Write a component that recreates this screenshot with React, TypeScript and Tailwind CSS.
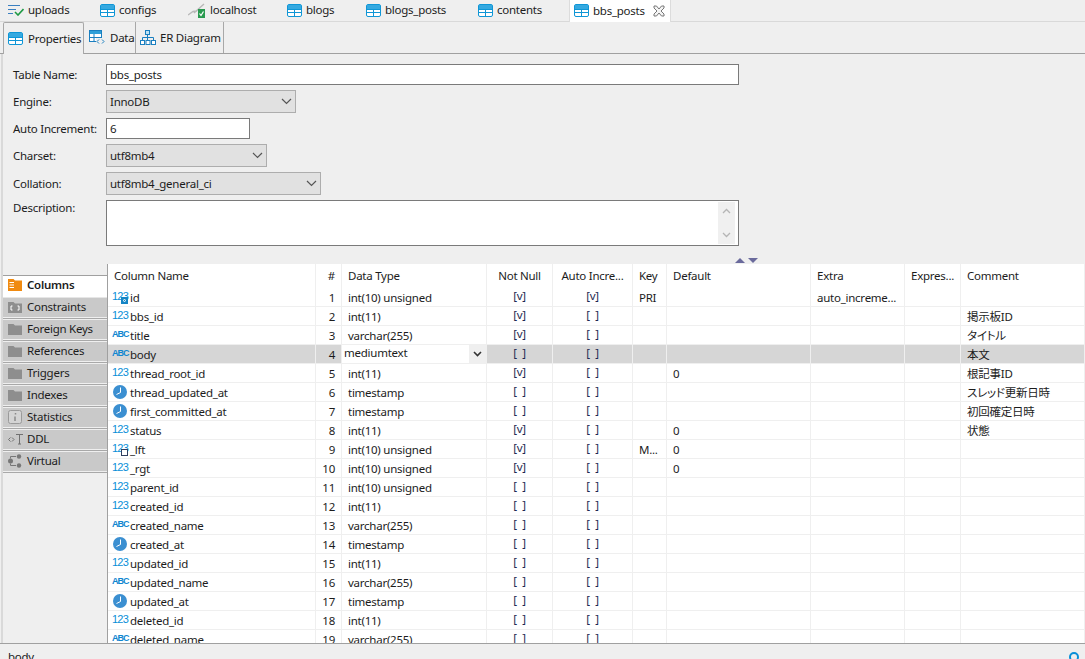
import type { ReactNode } from 'react'

const font = "font-['Noto_Sans','Noto_Sans_CJK_JP',sans-serif]"

function TableIcon() {
  return (
    <svg width="15" height="13" viewBox="0 0 15 13" className="shrink-0">
      <rect x="0.5" y="0.5" width="14" height="12" rx="1.5" fill="#fff" stroke="#0f96d6" />
      <rect x="1" y="1" width="13" height="4" fill="#35a9e0" />
      <path d="M0.5 5.5H14.5M0.5 8.5H14.5M7.5 5V12.5" stroke="#0f96d6" fill="none" />
    </svg>
  )
}

function UploadsIcon() {
  return (
    <svg width="16" height="12" viewBox="0 0 16 12" className="shrink-0">
      <path d="M0 1.5H12M0 5.5H8M0 9.5H5" stroke="#3a7fc0" fill="none" />
      <path d="M7 8L10 11L15.5 5" stroke="#1f9a45" strokeWidth="1.6" fill="none" />
    </svg>
  )
}

function HostIcon() {
  return (
    <svg width="18" height="15" viewBox="0 0 18 15" className="shrink-0">
      <path d="M0 12L5 8.5L9 8M6 10L16 1" stroke="#b8b8b8" strokeWidth="1.4" fill="none" />
      <rect x="10" y="6" width="7" height="9" fill="#2a9a50" />
      <path d="M11.5 10.5L13 12.5L15.5 8.5" stroke="#fff" strokeWidth="1.2" fill="none" />
    </svg>
  )
}

function DataIcon() {
  return (
    <svg width="16" height="15" viewBox="0 0 16 15" className="shrink-0">
      <rect x="0.5" y="0.5" width="12" height="11" fill="#fff" stroke="#1a7fc0" />
      <rect x="1" y="1" width="11" height="3" fill="#2f9fd8" />
      <path d="M1 7.5H12M5 4V12" stroke="#1a7fc0" fill="none" />
      <rect x="7" y="8" width="9" height="7" fill="#efefef" />
      <path d="M10 9.5L8 11.5L10 13.5M13 9.5L15 11.5L13 13.5" stroke="#1a7fc0" fill="none" />
    </svg>
  )
}

function ErIcon() {
  return (
    <svg width="16" height="15" viewBox="0 0 16 15" className="shrink-0">
      <rect x="5.5" y="0.5" width="4" height="4" fill="#bfe3f5" stroke="#1a7fc0" />
      <rect x="0.5" y="10.5" width="4" height="4" fill="#fff" stroke="#1a7fc0" />
      <rect x="6" y="10.5" width="4" height="4" fill="#fff" stroke="#1a7fc0" />
      <rect x="11.5" y="10.5" width="4" height="4" fill="#fff" stroke="#1a7fc0" />
      <path d="M7.5 4.5V10.5M2.5 10.5V7.5H13.5V10.5" stroke="#1a7fc0" fill="none" />
    </svg>
  )
}

function Chevron() {
  return (
    <svg width="11" height="7" viewBox="0 0 11 7" className="shrink-0">
      <path d="M1 1L5.5 5.5L10 1" stroke="#555" strokeWidth="1.2" fill="none" />
    </svg>
  )
}

function Folder({ children }: { children?: ReactNode }) {
  return (
    <svg width="14" height="12" viewBox="0 0 14 12" className="shrink-0">
      <path d="M0 1H5.5L7 2.5H14V12H0Z" fill="#8e8e8e" />
      {children}
    </svg>
  )
}

function SideIcon({ name }: { name: string }) {
  if (name === 'Columns') {
    return (
      <svg width="14" height="12" viewBox="0 0 14 12" className="shrink-0">
        <path d="M0 0H5.5L7 1.5H14V12H0Z" fill="#f08a10" />
        <path d="M1.5 3.5H6M1.5 6H6M1.5 8.5H6" stroke="#fff" strokeWidth="1.2" />
      </svg>
    )
  }
  if (name === 'Constraints') {
    return (
      <Folder>
        <path d="M4.5 5H3V9H4.5M9.5 5H11V9H9.5" stroke="#fff" fill="none" />
      </Folder>
    )
  }
  if (name === 'Statistics') {
    return (
      <svg width="14" height="14" viewBox="0 0 14 14" className="shrink-0">
        <rect x="0.5" y="0.5" width="13" height="13" rx="2" fill="#d4d4d4" stroke="#9a9a9a" />
        <path d="M7.5 3V4.5M7 6.5V11" stroke="#8a8a8a" strokeWidth="1.5" />
      </svg>
    )
  }
  if (name === 'DDL') {
    return (
      <svg width="16" height="12" viewBox="0 0 16 12" className="shrink-0">
        <path d="M2.5 4.5L0.5 6.5L2.5 8.5M4 4.5L6 6.5L4 8.5" stroke="#707070" fill="none" />
        <path d="M8 1.5H15M11.5 1.5V11M10 11H13" stroke="#707070" fill="none" />
      </svg>
    )
  }
  if (name === 'Virtual') {
    return (
      <svg width="14" height="14" viewBox="0 0 14 14" className="shrink-0">
        <circle cx="11" cy="2.5" r="2.2" fill="#777" />
        <circle cx="2.5" cy="7" r="2.5" fill="#777" />
        <circle cx="11" cy="11.5" r="2.2" fill="#777" />
        <path d="M2.5 4.5V2.5H8M2.5 9.5V11.5H8" stroke="#777" fill="none" />
      </svg>
    )
  }
  return <Folder />
}

function TypeIcon({ type, badge }: { type: string; badge?: string }) {
  return (
    <span className="relative mr-[2px] h-[18px] w-[16px] shrink-0 overflow-visible">
      {type === 'num' && (
        <span className="absolute left-0 top-[1px] font-['Liberation_Sans',sans-serif] text-[11px] leading-[14px] tracking-[-0.8px] text-[#0a8fd8]">123</span>
      )}
      {type === 'str' && (
        <span className="absolute left-0 top-[2px] font-['Liberation_Sans',sans-serif] text-[9px] leading-[12px] font-bold tracking-[-1px] text-[#0f86d0]">ABC</span>
      )}
      {type === 'time' && (
        <svg width="16" height="18" viewBox="0 0 16 18" className="absolute left-0 top-0">
          <circle cx="8" cy="9" r="7" fill="#3b8fd1" />
          <path d="M8.5 4.5V9.5L4.5 11.5" stroke="#fff" strokeWidth="1" fill="none" />
        </svg>
      )}
      {badge === 'key' && (
        <span className="absolute left-[9px] top-[9px] flex h-[7px] w-[7px] items-center justify-center bg-[#1585c5]">
          <span className="h-[3px] w-[3px] rounded-full border border-white" />
        </span>
      )}
      {badge === 'link' && (
        <span className="absolute left-[9px] top-[9px] h-[7px] w-[7px] border border-[#2f3f60] bg-white" />
      )}
    </span>
  )
}

const topTabs = [
  { name: 'uploads', w: 'w-[92px]', icon: <UploadsIcon /> },
  { name: 'configs', w: 'w-[88px]', icon: <TableIcon /> },
  { name: 'localhost', w: 'w-[99px]', icon: <HostIcon /> },
  { name: 'blogs', w: 'w-[79px]', icon: <TableIcon /> },
  { name: 'blogs_posts', w: 'w-[112px]', icon: <TableIcon /> },
  { name: 'contents', w: 'w-[99px]', icon: <TableIcon /> },
]

const sideTabs = ['Constraints', 'Foreign Keys', 'References', 'Triggers', 'Indexes', 'Statistics', 'DDL', 'Virtual']

const cols = [
  { name: 'Column Name', w: 'w-[208px]', align: 'pl-[6px]' },
  { name: '#', w: 'w-[26px]', align: 'justify-end pr-[6px]' },
  { name: 'Data Type', w: 'w-[145px]', align: 'pl-[6px]' },
  { name: 'Not Null', w: 'w-[66px]', align: 'justify-center' },
  { name: 'Auto Incre...', w: 'w-[80px]', align: 'justify-center' },
  { name: 'Key', w: 'w-[34px]', align: 'pl-[6px]' },
  { name: 'Default', w: 'w-[144px]', align: 'pl-[6px]' },
  { name: 'Extra', w: 'w-[94px]', align: 'pl-[6px]' },
  { name: 'Expres...', w: 'w-[56px]', align: 'pl-[6px]' },
  { name: 'Comment', w: 'w-[124px]', align: 'pl-[6px]' },
]

type Row = [string, string, string, boolean, boolean, string, string, string, string, string?]

const rows: Row[] = [
  ['num', 'id', 'int(10) unsigned', true, true, 'PRI', '', 'auto_increme...', '', 'key'],
  ['num', 'bbs_id', 'int(11)', true, false, '', '', '', '掲示板ID'],
  ['str', 'title', 'varchar(255)', true, false, '', '', '', 'タイトル'],
  ['str', 'body', 'mediumtext', false, false, '', '', '', '本文'],
  ['num', 'thread_root_id', 'int(11)', true, false, '', '0', '', '根記事ID'],
  ['time', 'thread_updated_at', 'timestamp', false, false, '', '', '', 'スレッド更新日時'],
  ['time', 'first_committed_at', 'timestamp', false, false, '', '', '', '初回確定日時'],
  ['num', 'status', 'int(11)', true, false, '', '0', '', '状態'],
  ['num', '_lft', 'int(10) unsigned', true, false, 'M...', '0', '', '', 'link'],
  ['num', '_rgt', 'int(10) unsigned', true, false, '', '0', '', ''],
  ['num', 'parent_id', 'int(10) unsigned', false, false, '', '', '', ''],
  ['num', 'created_id', 'int(11)', false, false, '', '', '', ''],
  ['str', 'created_name', 'varchar(255)', false, false, '', '', '', ''],
  ['time', 'created_at', 'timestamp', false, false, '', '', '', ''],
  ['num', 'updated_id', 'int(11)', false, false, '', '', '', ''],
  ['str', 'updated_name', 'varchar(255)', false, false, '', '', '', ''],
  ['time', 'updated_at', 'timestamp', false, false, '', '', '', ''],
  ['num', 'deleted_id', 'int(11)', false, false, '', '', '', ''],
  ['str', 'deleted_name', 'varchar(255)', false, false, '', '', '', ''],
]

function Check({ on }: { on: boolean }) {
  return <span className="-mt-[3px] text-[#1e2a52]">{on ? '[v]' : '[\u00a0\u00a0]'}</span>
}

function FormRow({ label, children }: { label: string; children: ReactNode }) {
  return (
    <div className="flex items-center">
      <span className="w-[93px] shrink-0">{label}</span>
      {children}
    </div>
  )
}

function Select({ value, width }: { value: string; width: string }) {
  return (
    <div className={`flex h-[23px] ${width} items-center justify-between border border-[#adadad] bg-[#e1e1e1] pl-[3px] pr-[3px]`}>
      <span>{value}</span>
      <Chevron />
    </div>
  )
}

export default function App() {
  return (
    <div className={`flex h-[659px] w-[1085px] flex-col overflow-hidden bg-[#efefef] text-[11.5px] tracking-[-0.25px] text-[#1c1c1c] ${font} [font-feature-settings:'palt']`}>
      {/* editor tabs */}
      <div className="flex h-[22px] shrink-0 border-b border-[#d9d9d9]">
        {topTabs.map((tab) => (
          <div key={tab.name} className={`flex ${tab.w} items-center gap-[4px] pb-[1px] pl-[8px]`}>
            {tab.icon}
            <span>{tab.name}</span>
          </div>
        ))}
        <div className="flex h-[22px] w-[102px] items-center gap-[4px] border-x border-[#dcdcdc] bg-white pb-[1px] pl-[4px]">
          <TableIcon />
          <span>bbs_posts</span>
          <svg width="12" height="12" viewBox="0 0 12 12" className="ml-[4px] shrink-0">
            <path d="M1 1H3.5L6 4L8.5 1H11V3L8 6L11 9V11H8.5L6 8L3.5 11H1V9L4 6L1 3Z" fill="#f4f4f4" stroke="#777" />
          </svg>
        </div>
      </div>

      {/* sub tabs */}
      <div className="flex h-[32px] shrink-0 whitespace-nowrap border-b border-[#a0a0a0] pl-[3px]">
        <div className="-mb-[1px] flex h-[32px] w-[81px] items-center gap-[5px] rounded-t-[2px] border-x border-t border-[#a8a8a8] bg-[#efefef] pl-[4px]">
          <TableIcon />
          <span className="mt-[1px]">Properties</span>
        </div>
        <div className="flex w-[52px] items-center gap-[5px] border-r border-[#a8a8a8] pl-[5px]">
          <DataIcon />
          <span className="mt-[1px]">Data</span>
        </div>
        <div className="flex w-[88px] items-center gap-[4px] border-r border-[#a8a8a8] pl-[4px]">
          <ErIcon />
          <span className="mt-[1px]">ER Diagram</span>
        </div>
      </div>

      <div className="ml-[1px] flex min-h-0 flex-1 flex-col border-l-2 border-l-[#d9d9d9]">
        {/* table properties */}
        <div className="flex shrink-0 flex-col gap-[5px] pl-[10px] pt-[10px]">
          <FormRow label="Table Name:">
            <div className="flex h-[21px] w-[633px] items-center border border-[#7a7a7a] bg-white pl-[3px]">bbs_posts</div>
          </FormRow>
          <FormRow label="Engine:">
            <Select value="InnoDB" width="w-[190px]" />
          </FormRow>
          <FormRow label="Auto Increment:">
            <div className="flex h-[21px] w-[144px] items-center border border-[#7a7a7a] bg-white pl-[3px]">6</div>
          </FormRow>
          <FormRow label="Charset:">
            <Select value="utf8mb4" width="w-[161px]" />
          </FormRow>
          <FormRow label="Collation:">
            <Select value="utf8mb4_general_ci" width="w-[215px]" />
          </FormRow>
          <div className="flex items-start">
            <span className="-mt-[1px] w-[93px] shrink-0">Description:</span>
            <div className="flex h-[46px] w-[633px] justify-end border border-[#7a7a7a] bg-white pr-[3px]">
              <div className="my-[1px] flex w-[17px] flex-col items-center justify-between bg-[#f0f0f0] py-[6px]">
                <svg width="9" height="6" viewBox="0 0 9 6">
                  <path d="M1 5L4.5 1.5L8 5" stroke="#b5b5b5" strokeWidth="1.3" fill="none" />
                </svg>
                <svg width="9" height="6" viewBox="0 0 9 6">
                  <path d="M1 1L4.5 4.5L8 1" stroke="#b5b5b5" strokeWidth="1.3" fill="none" />
                </svg>
              </div>
            </div>
          </div>
        </div>

        {/* sash */}
        <div className="flex h-[18px] shrink-0 items-end justify-start gap-[3px] pb-[1px] pl-[732px]">
          <span className="h-0 w-0 border-x-[5px] border-b-[5px] border-x-transparent border-b-[#6a6a9c]" />
          <span className="h-0 w-0 border-x-[5px] border-t-[5px] border-x-transparent border-t-[#6a6a9c]" />
        </div>

        <div className="flex min-h-0 flex-1">
          {/* side folders */}
          <div className="flex w-[105px] shrink-0 flex-col border-r border-[#a0a0a0] pt-[11px]">
            <div className="flex h-[22px] items-center gap-[5px] border-t border-[#a0a0a0] bg-white pb-[3px] pl-[5px] font-semibold">
              <SideIcon name="Columns" />
              <span>Columns</span>
            </div>
            <div className="h-[1px] bg-[#e6e6e6]" />
            {sideTabs.map((name) => (
              <div key={name} className="flex flex-col">
                <div className="flex h-[19px] items-center gap-[5px] bg-[#c9c9c9] pb-[2px] pl-[5px]">
                  <span className="flex w-[16px] justify-start">
                    <SideIcon name={name} />
                  </span>
                  <span className="-ml-[2px]">{name}</span>
                </div>
                <div className="h-[1px] bg-[#efefef]" />
                <div className="h-[1px] bg-[#a8a8a8]" />
                <div className="h-[1px] bg-[#efefef]" />
              </div>
            ))}
          </div>

          {/* columns grid */}
          <div className="flex min-w-0 flex-1 flex-col overflow-hidden bg-white">
            <div className="flex h-[24px] shrink-0">
              {cols.map((col) => (
                <div key={col.name} className={`flex ${col.w} shrink-0 items-center whitespace-nowrap border-r border-[#efefef] ${col.align}`}>
                  {col.name}
                </div>
              ))}
            </div>
            {rows.map((row, n) => {
              const selected = row[1] === 'body'
              const bg = selected ? 'bg-[#d6d6d6]' : ''
              const cells: ReactNode[] = [
                <span className="-ml-[2px] flex items-center">
                  <TypeIcon type={row[0]} badge={row[9]} />
                  <span className="mt-[1px]">{row[1]}</span>
                </span>,
                <span className="mt-[2px]">{n + 1}</span>,
                selected ? (
                  <div className="-ml-[6px] flex h-[18px] w-[144px]">
                    <div className="flex w-[127px] items-center bg-white pl-[2px]">
                      <span className="-mt-[2px]">mediumtext</span>
                    </div>
                    <div className="flex w-[17px] items-center justify-center bg-[#efefef]">
                      <svg width="9" height="6" viewBox="0 0 9 6" className="shrink-0">
                        <path d="M1 1L4.5 4.5L8 1" stroke="#333" strokeWidth="1.6" fill="none" />
                      </svg>
                    </div>
                  </div>
                ) : (
                  <span className="mt-[2px]">{row[2]}</span>
                ),
                <Check on={row[3]} />,
                <Check on={row[4]} />,
                <span className="mt-[1px]">{row[5]}</span>,
                <span className="mt-[2px]">{row[6]}</span>,
                <span className="mt-[1px]">{row[7]}</span>,
                '',
                <span className="mt-[2px]">{row[8]}</span>,
              ]
              return (
                <div key={row[1]} className={`flex h-[19px] shrink-0 border-b border-[#efefef] ${bg}`}>
                  {cols.map((col, i) => (
                    <div key={col.name} className={`flex ${col.w} shrink-0 items-center whitespace-nowrap border-r border-[#efefef] ${col.align}`}>
                      {cells[i]}
                    </div>
                  ))}
                </div>
              )
            })}
          </div>
        </div>
      </div>

      {/* status */}
      <div className="flex h-[16px] shrink-0 items-start justify-between border-t border-[#a0a0a0] bg-[#efefef] pl-[8px] pr-[6px] pt-[5px]">
        <span className="leading-[16px]">body</span>
        <span className="mt-[3px] h-[10px] w-[10px] shrink-0 rounded-full border-2 border-[#0a8fd8]" />
      </div>
    </div>
  )
}
